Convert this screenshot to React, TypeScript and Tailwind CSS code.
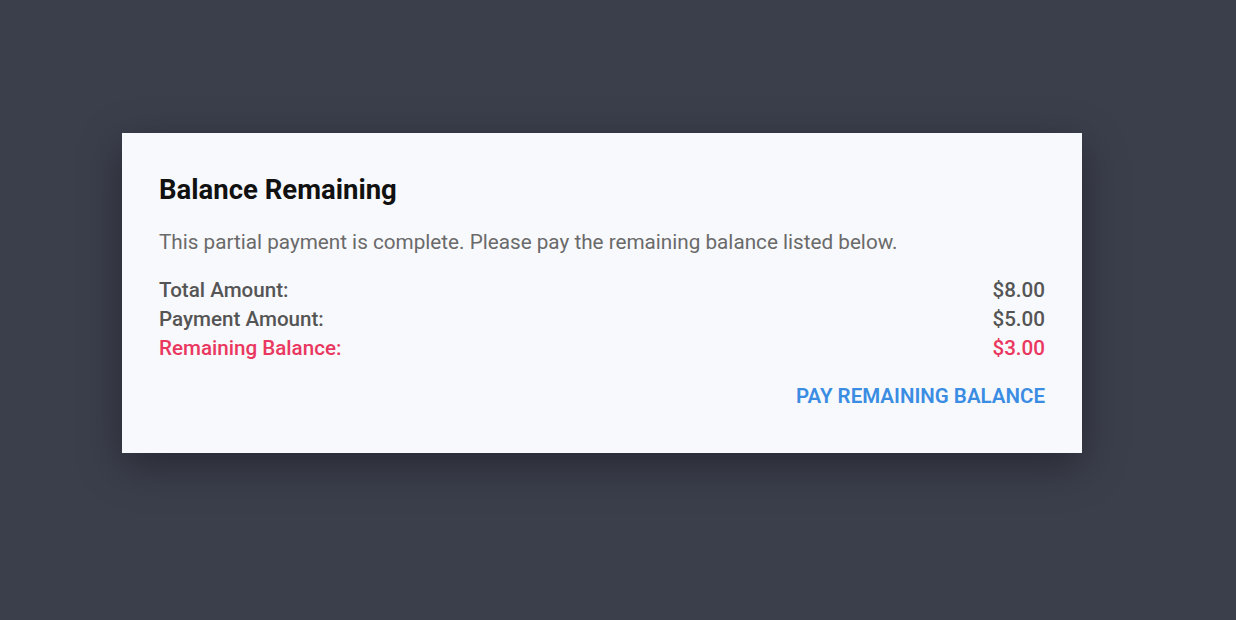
import React from "react";

export default function App() {
  const rows = [
    { label: "Total Amount:", value: "$8.00", red: false },
    { label: "Payment Amount:", value: "$5.00", red: false },
    { label: "Remaining Balance:", value: "$3.00", red: true },
  ];
  return (
    <div
      className="w-[1236px] h-[620px] bg-[#3b3f4c] pt-[133px] pl-[122px] overflow-hidden"
      style={{ fontFamily: "Roboto, 'Liberation Sans', sans-serif" }}
    >
      <div className="w-[960px] h-[320px] bg-[#f8f9fc] pt-[41px] px-[37px] shadow-[0_12px_40px_rgba(0,0,0,0.35)]">
        <h2 className="text-[27.5px] leading-[32px] font-bold text-[#111111]">Balance Remaining</h2>
        <p className="mt-[22px] text-[20.7px] leading-[28px] text-[#6a6a6a]">
          This partial payment is complete. Please pay the remaining balance listed below.
        </p>
        <div className="mt-[20px]">
          {rows.map((r) => (
            <div
              key={r.label}
              className={
                "flex justify-between text-[20.6px] leading-[29px] font-medium " +
                (r.red ? "text-[#ea3760]" : "text-[#555555]")
              }
            >
              <span>{r.label}</span>
              <span>{r.value}</span>
            </div>
          ))}
        </div>
        <div className="mt-[19px] flex justify-end">
          <button className="text-[20.5px] leading-[28px] font-semibold uppercase text-[#3b8de3]">
            Pay Remaining Balance
          </button>
        </div>
      </div>
    </div>
  );
}
